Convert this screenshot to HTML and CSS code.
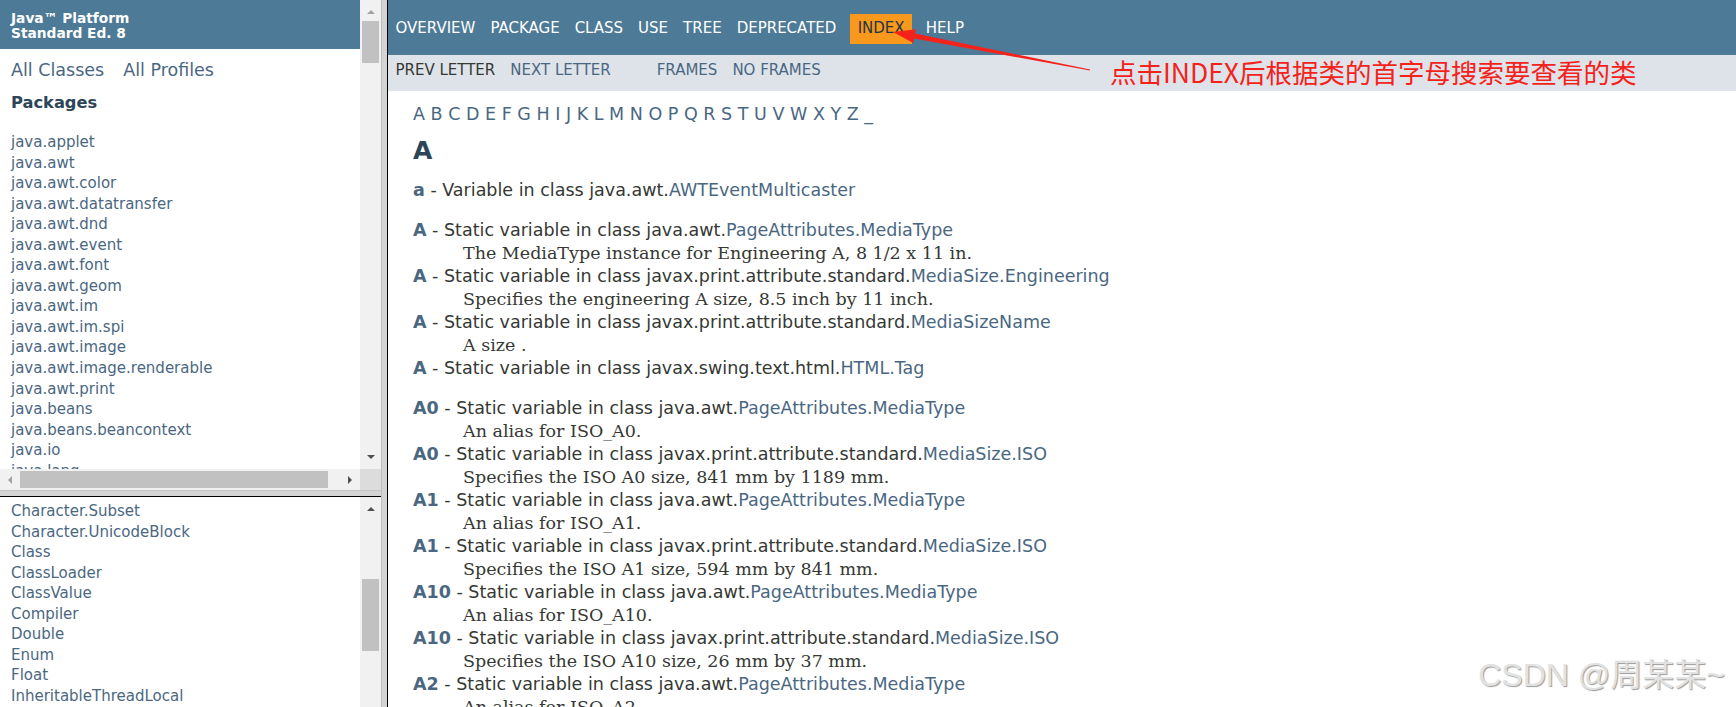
FILE: index.html
```html
<!DOCTYPE html>
<html>
<head>
<meta charset="UTF-8">

<title>
A - 索引 (Java Platform SE 8)
</title>

<link rel="stylesheet" href="styles.css">

</head>
<body>

<div class="page">

  <!-- left side: package frame on top, class frame below -->
  <div class="side">
    <div class="frame frame-top">
      <div class="view">
        <div class="bar">Java™ Platform<br>Standard Ed. 8</div>
        <div class="index-header">
          <a href="#">All Classes</a><a href="#">All Profiles</a>
        </div>
        <h2 class="list-title">Packages</h2>
        <ul class="list">
          <li><a href="#">java.applet</a></li>
          <li><a href="#">java.awt</a></li>
          <li><a href="#">java.awt.color</a></li>
          <li><a href="#">java.awt.datatransfer</a></li>
          <li><a href="#">java.awt.dnd</a></li>
          <li><a href="#">java.awt.event</a></li>
          <li><a href="#">java.awt.font</a></li>
          <li><a href="#">java.awt.geom</a></li>
          <li><a href="#">java.awt.im</a></li>
          <li><a href="#">java.awt.im.spi</a></li>
          <li><a href="#">java.awt.image</a></li>
          <li><a href="#">java.awt.image.renderable</a></li>
          <li><a href="#">java.awt.print</a></li>
          <li><a href="#">java.beans</a></li>
          <li><a href="#">java.beans.beancontext</a></li>
          <li><a href="#">java.io</a></li>
          <li><a href="#">java.lang</a></li>
          <li><a href="#">java.lang.annotation</a></li>
        </ul>
      </div>
      <div class="vscroll">
        <div class="btn"><span class="tri up off"></span></div>
        <div class="track"><div class="thumb thumb-top"></div></div>
        <div class="btn"><span class="tri down"></span></div>
      </div>
      <div class="hscroll">
        <div class="btn"><span class="tri left off"></span></div>
        <div class="track"><div class="thumb thumb-wide"></div></div>
        <div class="btn"><span class="tri right"></span></div>
      </div>
      <div class="corner"></div>
    </div>

    <div class="hsplit"></div>

    <div class="frame frame-bottom">
      <div class="view">
        <ul class="list classes">
          <li><a href="#">Character.Subset</a></li>
          <li><a href="#">Character.UnicodeBlock</a></li>
          <li><a href="#">Class</a></li>
          <li><a href="#">ClassLoader</a></li>
          <li><a href="#">ClassValue</a></li>
          <li><a href="#">Compiler</a></li>
          <li><a href="#">Double</a></li>
          <li><a href="#">Enum</a></li>
          <li><a href="#">Float</a></li>
          <li><a href="#">InheritableThreadLocal</a></li>
          <li><a href="#">Integer</a></li>
        </ul>
      </div>
      <div class="vscroll">
        <div class="btn"><span class="tri up"></span></div>
        <div class="track"><div class="thumb thumb-low"></div></div>
      </div>
    </div>
  </div>

  <div class="vsplit"></div>

  <!-- right side: index page -->
  <div class="main">
    <ul class="top-nav">
      <li><a href="#">Overview</a></li>
      <li><a href="#">Package</a></li>
      <li><a href="#">Class</a></li>
      <li><a href="#">Use</a></li>
      <li><a href="#">Tree</a></li>
      <li><a href="#">Deprecated</a></li>
      <li class="current">Index</li>
      <li><a href="#">Help</a></li>
    </ul>

    <div class="sub-nav">
      <ul class="nav-list">
        <li>Prev Letter</li>
        <li><a href="#">Next Letter</a></li>
      </ul>
      <ul class="nav-list">
        <li><a href="#">Frames</a></li>
        <li><a href="#">No&nbsp;Frames</a></li>
      </ul>
    </div>

    <div class="content">
      <div class="letters">
        <a href="#">A</a>&nbsp;<a href="#">B</a>&nbsp;<a href="#">C</a>&nbsp;<a href="#">D</a>&nbsp;<a href="#">E</a>&nbsp;<a href="#">F</a>&nbsp;<a href="#">G</a>&nbsp;<a href="#">H</a>&nbsp;<a href="#">I</a>&nbsp;<a href="#">J</a>&nbsp;<a href="#">K</a>&nbsp;<a href="#">L</a>&nbsp;<a href="#">M</a>&nbsp;<a href="#">N</a>&nbsp;<a href="#">O</a>&nbsp;<a href="#">P</a>&nbsp;<a href="#">Q</a>&nbsp;<a href="#">R</a>&nbsp;<a href="#">S</a>&nbsp;<a href="#">T</a>&nbsp;<a href="#">U</a>&nbsp;<a href="#">V</a>&nbsp;<a href="#">W</a>&nbsp;<a href="#">X</a>&nbsp;<a href="#">Y</a>&nbsp;<a href="#">Z</a>&nbsp;<a href="#">_</a>
      </div>

      <h2 class="title">A</h2>

      <dl class="entries">
        <dt><a class="name" href="#">a</a> - Variable in class java.awt.<a href="#">AWTEventMulticaster</a></dt>
        <dd>&nbsp;</dd>
        <dt><a class="name" href="#">A</a> - Static variable in class java.awt.<a href="#">PageAttributes.MediaType</a></dt>
        <dd><div class="block">The MediaType instance for Engineering A, 8 1/2 x 11 in.</div></dd>
        <dt><a class="name" href="#">A</a> - Static variable in class javax.print.attribute.standard.<a href="#">MediaSize.Engineering</a></dt>
        <dd><div class="block">Specifies the engineering A size, 8.5 inch by 11 inch.</div></dd>
        <dt><a class="name" href="#">A</a> - Static variable in class javax.print.attribute.standard.<a href="#">MediaSizeName</a></dt>
        <dd><div class="block">A size .</div></dd>
        <dt><a class="name" href="#">A</a> - Static variable in class javax.swing.text.html.<a href="#">HTML.Tag</a></dt>
        <dd>&nbsp;</dd>
        <dt><a class="name" href="#">A0</a> - Static variable in class java.awt.<a href="#">PageAttributes.MediaType</a></dt>
        <dd><div class="block">An alias for ISO_A0.</div></dd>
        <dt><a class="name" href="#">A0</a> - Static variable in class javax.print.attribute.standard.<a href="#">MediaSize.ISO</a></dt>
        <dd><div class="block">Specifies the ISO A0 size, 841 mm by 1189 mm.</div></dd>
        <dt><a class="name" href="#">A1</a> - Static variable in class java.awt.<a href="#">PageAttributes.MediaType</a></dt>
        <dd><div class="block">An alias for ISO_A1.</div></dd>
        <dt><a class="name" href="#">A1</a> - Static variable in class javax.print.attribute.standard.<a href="#">MediaSize.ISO</a></dt>
        <dd><div class="block">Specifies the ISO A1 size, 594 mm by 841 mm.</div></dd>
        <dt><a class="name" href="#">A10</a> - Static variable in class java.awt.<a href="#">PageAttributes.MediaType</a></dt>
        <dd><div class="block">An alias for ISO_A10.</div></dd>
        <dt><a class="name" href="#">A10</a> - Static variable in class javax.print.attribute.standard.<a href="#">MediaSize.ISO</a></dt>
        <dd><div class="block">Specifies the ISO A10 size, 26 mm by 37 mm.</div></dd>
        <dt><a class="name" href="#">A2</a> - Static variable in class java.awt.<a href="#">PageAttributes.MediaType</a></dt>
        <dd><div class="block">An alias for ISO_A2.</div></dd>
      </dl>
    </div>
  </div>

</div>

<!-- screenshot annotation -->
<svg class="arrow" width="1736" height="707" viewBox="0 0 1736 707">
  <polygon points="893,32 915.9,29.2 915.1,33.6 1090.1,69.5 1089.9,70.5 914.1,38.6 913.3,43" fill="#f5221b"/>
</svg>
<div class="note">点击INDEX后根据类的首字母搜索要查看的类</div>

<div class="watermark">CSDN @周某某~</div>

</body>
</html>
```

FILE: styles.css
```css
body {
  margin: 0;
  font-family: "DejaVu Sans", Arial, sans-serif;
  color: #353833;
  background-color: #ffffff;
  overflow: hidden;
}

a {
  color: #4A6782;
  text-decoration: none;
}

.page {
  display: grid;
  grid-template-columns: 381px 7px 1fr;
  height: 707px;
  overflow: hidden;
}

/* ---- left frames ---- */
.side {
  display: flex;
  flex-direction: column;
  overflow: hidden;
}

.frame {
  display: grid;
  grid-template-columns: 360px 21px;
}

.frame-top {
  grid-template-rows: 469px 21px;
}

.frame-bottom {
  grid-template-rows: 210px;
}

.view {
  overflow: hidden;
  background-color: #fff;
}

.bar {
  height: 49px;
  box-sizing: border-box;
  padding: 11px 7px 0 11px;
  background-color: #4D7A97;
  color: #fff;
  font-size: 13.75px;
  font-weight: bold;
  line-height: 15px;
}

.index-header {
  margin: 11px 0 0 11px;
  font-size: 17.5px;
  line-height: 20px;
  white-space: nowrap;
}

.index-header a {
  margin-right: 19px;
}

.list-title {
  margin: 13px 0 0 11px;
  font-size: 16.25px;
  line-height: 19px;
  color: #2c4557;
}

.list {
  margin: 22px 0 0 11px;
  padding: 0;
  list-style: none;
  font-size: 15px;
  white-space: nowrap;
}

.list li {
  line-height: 17px;
  margin-bottom: 3.55px;
}

.list.classes {
  margin-top: 6px;
}

/* scrollbars */
.vscroll {
  display: flex;
  flex-direction: column;
  background-color: #f1f1f1;
}

.hscroll {
  display: flex;
  background-color: #f1f1f1;
}

.btn {
  flex: none;
  width: 21px;
  height: 21px;
  display: flex;
  align-items: center;
  justify-content: center;
}

.hscroll .btn {
  width: 20px;
}

.track {
  flex: 1;
  position: relative;
}

.thumb {
  background-color: #c1c1c1;
}

.thumb-top {
  margin: 0 2px;
  height: 42px;
}

.thumb-low {
  margin: 61px 2px 0;
  height: 72px;
}

.thumb-wide {
  margin: 2px 12px 0 0;
  height: 17px;
}

.corner {
  background-color: #dcdcdc;
}

.tri {
  width: 0;
  height: 0;
  border: 4px solid transparent;
}

.tri.up {
  border-top: none;
  border-bottom: 4px solid #505050;
  margin-top: 2px;
}

.tri.down {
  border-bottom: none;
  border-top: 4px solid #505050;
  margin-top: -3px;
}

.tri.left {
  border-left: none;
  border-right: 4px solid #505050;
}

.tri.right {
  border-right: none;
  border-left: 4px solid #505050;
}

.tri.up.off {
  border-bottom-color: #a3a3a3;
}

.tri.left.off {
  border-right-color: #a3a3a3;
}

/* frame borders */
.hsplit {
  flex: none;
  height: 7px;
  box-sizing: border-box;
  background-color: #d4d4d4;
  border-top: 1px solid #c4c4c4;
  border-bottom: 1px solid #000;
}

.vsplit {
  background-color: #d4d4d4;
  border-left: 1px solid #bdbdbd;
  border-right: 1px solid #000;
}

/* ---- right frame ---- */
.main {
  overflow: hidden;
  background-color: #fff;
}

.top-nav {
  display: flex;
  height: 55px;
  box-sizing: border-box;
  margin: 0;
  padding: 13.5px 0 0 0;
  list-style: none;
  background-color: #4D7A97;
  font-size: 15px;
  text-transform: uppercase;
}

.top-nav li {
  padding: 6.25px 7.5px;
  line-height: 17.5px;
  height: 17.5px;
}

.top-nav a {
  color: #fff;
}

.top-nav .current {
  margin: 0 6.25px;
  background-color: #F8981D;
  color: #253441;
}

.sub-nav {
  display: flex;
  height: 36px;
  background-color: #dee3e9;
  font-size: 15px;
  text-transform: uppercase;
}

.nav-list {
  display: flex;
  margin: 0 31px 0 0;
  padding: 2px 0 0 0;
  list-style: none;
}

.nav-list li {
  padding: 5px 7.5px;
  line-height: 17.5px;
  white-space: nowrap;
}

.content {
  padding: 12.5px 25px;
  font-size: 17.5px;
}

.letters {
  line-height: 20px;
}

.title {
  margin: 12px 0 0 0;
  font-size: 25px;
  line-height: 29px;
  color: #2c4557;
}

.entries {
  margin: 15px 0 0 0;
}

.entries dt {
  line-height: 20px;
  white-space: nowrap;
}

.entries .name {
  font-weight: bold;
}

.entries dd {
  margin: 0 0 0 50px;
  line-height: 20px;
}

.entries .block {
  margin: 3.5px 0 2.5px 0;
  font-family: "DejaVu Serif", Georgia, serif;
}

/* ---- annotation overlay ---- */
.arrow {
  position: absolute;
  left: 0;
  top: 0;
  pointer-events: none;
}

.note {
  position: absolute;
  left: 1110px;
  top: 56px;
  font-family: "Noto Sans CJK SC", "Noto Sans", sans-serif;
  font-size: 26.5px;
  line-height: 32px;
  color: #f5221b;
  white-space: nowrap;
}

.watermark {
  position: absolute;
  right: 11px;
  top: 655px;
  font-family: "Liberation Sans", "Noto Sans CJK SC", sans-serif;
  font-size: 32px;
  line-height: 40px;
  color: #e2e2e2;
  text-shadow: 1px 1px 1px #9a9a9a;
  white-space: nowrap;
}
```
